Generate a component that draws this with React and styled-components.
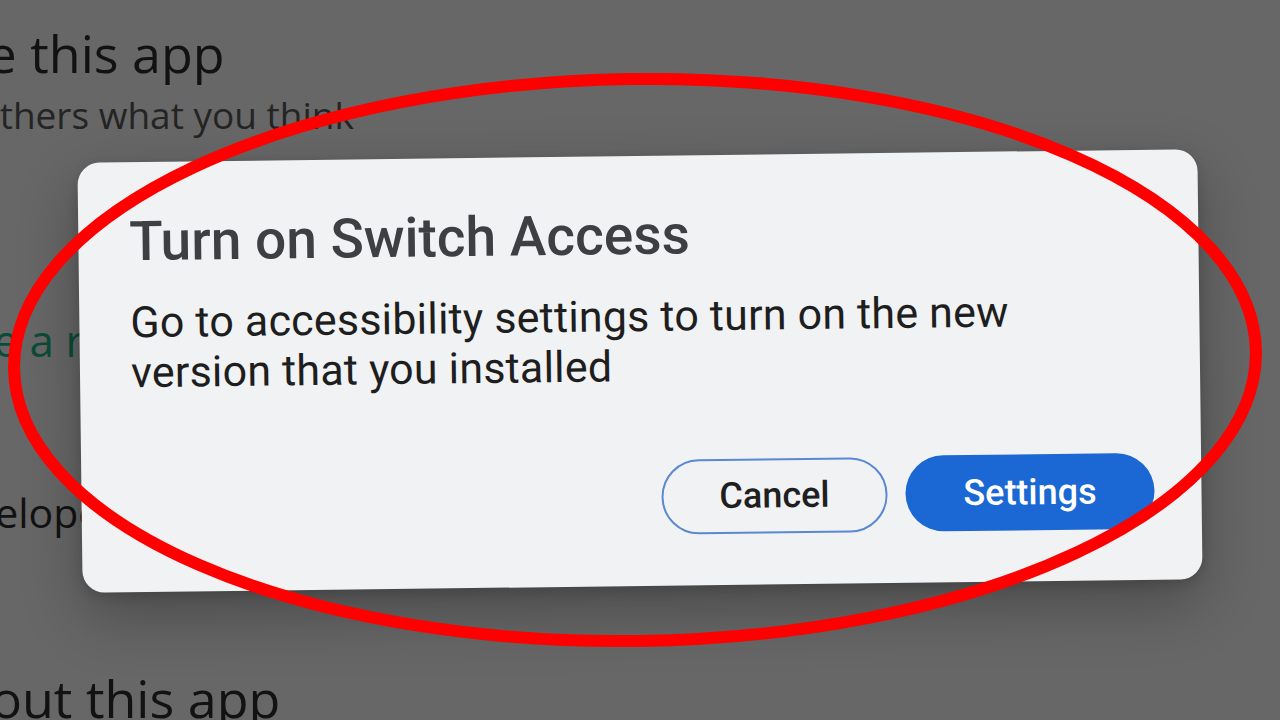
import React from "react";
import styled, { createGlobalStyle } from "styled-components";

const Global = createGlobalStyle`
  html, body { margin: 0; padding: 0; }
  body { width: 1280px; height: 720px; overflow: hidden; background: #676767; }
  * { box-sizing: border-box; }
`;

const Screen = styled.div`
  position: relative;
  width: 1280px;
  height: 720px;
  overflow: hidden;
  background: #676767;
  font-family: "Open Sans", "Noto Sans", sans-serif;
`;

const PageColumn = styled.div`
  display: flex;
  flex-direction: column;
  margin-left: -92px;
  white-space: nowrap;
`;

const Line = styled.div`
  font-size: ${(p) => p.$size}px;
  line-height: ${(p) => p.$lh}px;
  height: ${(p) => p.$lh}px;
  margin-top: ${(p) => p.$mt}px;
  margin-left: ${(p) => p.$ml || 0}px;
  color: ${(p) => p.$color || "#121212"};
  font-weight: ${(p) => p.$weight || 500};
`;

const Overlay = styled.div`
  position: absolute;
  inset: 0;
  display: flex;
  align-items: center;
  justify-content: center;
  padding-top: 22px;
`;

const Dialog = styled.div`
  width: 1120px;
  height: 430px;
  border-radius: 22px;
  background: #f1f2f4;
  padding: 47px 47px 51px 51px;
  display: flex;
  flex-direction: column;
  transform: rotate(-0.7deg);
  box-shadow: 0 24px 60px rgba(0, 0, 0, 0.28), 0 4px 12px rgba(0, 0, 0, 0.15);
  font-family: Roboto, "Noto Sans", sans-serif;
`;

const Title = styled.h2`
  margin: 0;
  font-size: 55px;
  line-height: 64px;
  font-weight: 500;
  color: #3c4043;
`;

const Body = styled.p`
  margin: 24px 0 0;
  max-width: 930px;
  font-size: 43px;
  line-height: 50px;
  font-weight: 400;
  color: #1e1e1e;
  letter-spacing: 0.2px;
`;

const Actions = styled.div`
  margin-top: auto;
  display: flex;
  justify-content: flex-end;
  align-items: center;
  gap: 18px;
`;

const PillButton = styled.button`
  height: ${(p) => (p.$primary ? 76 : 75)}px;
  width: ${(p) => p.$w}px;
  border-radius: 999px;
  font-family: Roboto, "Noto Sans", sans-serif;
  font-size: 36px;
  font-weight: 500;
  padding: 0;
  cursor: pointer;
  border: ${(p) => (p.$primary ? "none" : "2px solid #5a89d2")};
  background: ${(p) => (p.$primary ? "#1b67d3" : "transparent")};
  color: ${(p) => (p.$primary ? "#ffffff" : "#1f1f1f")};
`;

const Mark = styled.svg`
  position: absolute;
  inset: 0;
  width: 1280px;
  height: 720px;
  pointer-events: none;
`;

export default function App() {
  return (
    <>
      <Global />
      <Screen>
        <PageColumn>
          <Line $size={52} $lh={60} $mt={23}>Rate this app</Line>
          <Line $size={37} $lh={44} $mt={10} $color="#242424" $weight={400}>Tell others what you think</Line>
          <Line $size={44} $lh={52} $mt={177} $color="#0b4c38">Write a review</Line>
          <Line $size={41} $lh={48} $mt={122} $ml={14}>Developer contact</Line>
          <Line $size={52} $lh={60} $mt={132} $ml={18}>About this app</Line>
        </PageColumn>
        <Overlay>
          <Dialog role="dialog">
            <Title>Turn on Switch Access</Title>
            <Body>Go to accessibility settings to turn on the new version that you installed</Body>
            <Actions>
              <PillButton $w={226}>Cancel</PillButton>
              <PillButton $w={249} $primary>Settings</PillButton>
            </Actions>
          </Dialog>
        </Overlay>
        <Mark viewBox="0 0 1280 720">
          <ellipse
            cx="635"
            cy="360"
            rx="621"
            ry="281"
            fill="none"
            stroke="#ff0000"
            strokeWidth="12"
            transform="rotate(-0.8 635 360)"
          />
        </Mark>
      </Screen>
    </>
  );
}
